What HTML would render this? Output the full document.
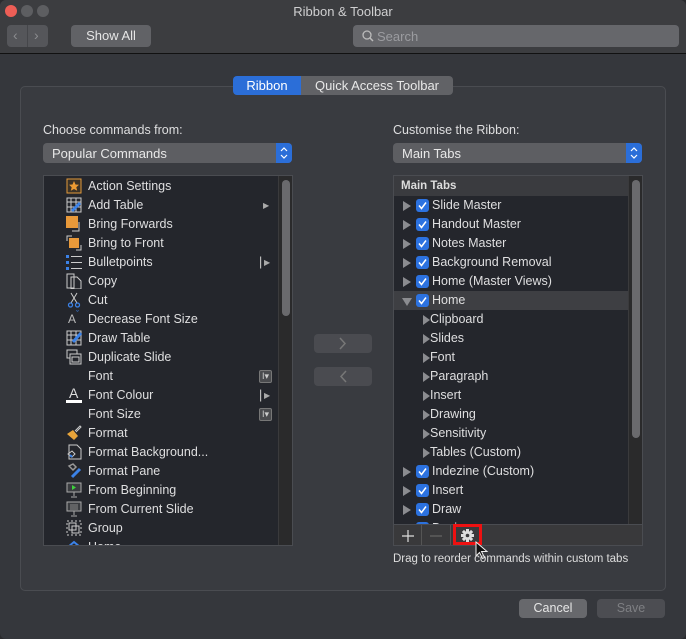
<!DOCTYPE html>
<html><head><meta charset="utf-8"><style>
*{box-sizing:border-box;margin:0;padding:0}
body{width:686px;height:639px;overflow:hidden;background:#2a2b2e;font-family:"Liberation Sans",sans-serif;font-size:12.5px;color:#dfdfe0;position:relative}
.win{position:absolute;left:0;top:0;width:686px;height:639px;background:#35373c;border-radius:6px;overflow:hidden}
.tb{position:absolute;left:0;top:0;width:686px;height:54px;background:#3c3d40;border-bottom:1px solid #111}
.a{position:absolute}
.dot{position:absolute;top:5px;width:12px;height:12px;border-radius:50%;background:#5d5e61}
.btn{position:absolute;background:#616266;border-radius:4px;color:#e6e6e6;text-align:center}
.box{position:absolute;left:20px;top:86px;width:646px;height:505px;background:#393b40;border:1px solid #4a4c51;border-radius:5px}
.pop{position:absolute;height:20px;background:#5d5e62;border-radius:4px;color:#e8e8e8;padding:3px 0 0 9px;font-size:13px}
.pop .ar{position:absolute;right:0;top:0;width:16px;height:20px;background:#2b6ed8;border-radius:0 4px 4px 0}
.list{position:absolute;top:175px;width:250px;height:371px;background:#24262c;border:1px solid #4a4c51;overflow:hidden}
.row{position:absolute;left:0;height:19px;line-height:19px;white-space:nowrap}
.track{position:absolute;top:0;right:0;width:14px;height:371px;background:#2a2a2b;border-left:1px solid #3a3a3c}
.thumb{position:absolute;left:3px;width:8px;background:#6a6a6d;border-radius:4px}
.ic{position:absolute;left:22px;top:1px}
.cb{position:absolute;top:3px;width:13px;height:13px;background:#2c72e0;border-radius:3px}
.tri{position:absolute;top:5px;width:0;height:0;border-top:5px solid transparent;border-bottom:5px solid transparent;border-left:8px solid #8b8c90}
</style></head><body>
<div class="win">
<div class="tb">
 <div class="dot" style="left:5px;background:#ed5e56"></div>
 <div class="dot" style="left:21px"></div>
 <div class="dot" style="left:37px"></div>
 <div class="a" style="left:0;width:686px;top:4px;text-align:center;color:#cfcfd0;font-size:13px">Ribbon &amp; Toolbar</div>
 <div class="btn" style="left:7px;top:25px;width:41px;height:22px;background:#55565a"><div class="a" style="left:20px;top:0;width:1px;height:22px;background:#45464a"></div><span class="a" style="left:6px;top:2px;color:#8c8d90;font-size:14px">‹</span><span class="a" style="left:27px;top:2px;color:#8c8d90;font-size:14px">›</span></div>
 <div class="btn" style="left:71px;top:25px;width:80px;height:22px;line-height:22px;font-size:13px">Show All</div>
 <div class="btn" style="left:353px;top:25px;width:326px;height:22px;background:#66676b;text-align:left">
  <svg class="a" style="left:9px;top:5px" width="12" height="12"><circle cx="5" cy="5" r="4" fill="none" stroke="#bbb" stroke-width="1.3"/><line x1="8" y1="8" x2="11" y2="11" stroke="#bbb" stroke-width="1.5"/></svg>
  <span class="a" style="left:24px;top:4px;color:#9b9ca0;font-size:13px">Search</span></div>
</div>
<div class="box"></div>
<div class="a" style="left:233px;top:76px;width:68px;height:19px;background:#2b6ed8;border-radius:4px 0 0 4px;color:#fff;text-align:center;line-height:19px;font-size:13px">Ribbon</div>
<div class="a" style="left:301px;top:76px;width:152px;height:19px;background:#616266;border-radius:0 4px 4px 0;color:#e8e8e8;text-align:center;line-height:19px;font-size:13px">Quick Access Toolbar</div>
<div class="a" style="left:43px;top:123px;font-size:12.5px">Choose commands from:</div>
<div class="a" style="left:393px;top:123px;font-size:12.5px">Customise the Ribbon:</div>
<div class="pop" style="left:43px;top:143px;width:249px">Popular Commands<div class="ar"><svg width="16" height="20"><path d="M5 8l3-3 3 3M5 12l3 3 3-3" fill="none" stroke="#fff" stroke-width="1.2"/></svg></div></div>
<div class="pop" style="left:393px;top:143px;width:249px">Main Tabs<div class="ar"><svg width="16" height="20"><path d="M5 8l3-3 3 3M5 12l3 3 3-3" fill="none" stroke="#fff" stroke-width="1.2"/></svg></div></div>

<div class="list" style="left:43px">
 <div class="row" style="top:1px"><svg class="ic" width="16" height="16"><rect x="1" y="1" width="14" height="14" fill="#3a3228" stroke="#e39a3a"/><path d="M8 3l1.5 3.5 3.5.3-2.7 2.4.9 3.6L8 11l-3.2 1.8.9-3.6L3 6.8l3.5-.3z" fill="#eb9a33"/></svg><span style="margin-left:44px">Action Settings</span></div>
 <div class="row" style="top:20px"><svg class="ic" width="16" height="16"><path d="M1 1h14v14H1zM1 5h14M1 10h14M5 1v14M10 1v14" fill="none" stroke="#ccc"/><path d="M6 14l8-8" stroke="#3b82e8" stroke-width="3"/></svg><span style="margin-left:44px">Add Table</span><span class="a" style="left:219px;top:0;color:#aaa;font-size:8px">▶</span></div>
 <div class="row" style="top:39px"><svg class="ic" width="16" height="16"><rect x="0" y="0" width="12" height="12" fill="#e8993a"/><path d="M13 6v9H6" fill="none" stroke="#ccc"/></svg><span style="margin-left:44px">Bring Forwards</span></div>
 <div class="row" style="top:58px"><svg class="ic" width="16" height="16"><path d="M1 6V1h5M10 15h5v-5" fill="none" stroke="#ccc"/><rect x="3" y="3" width="10" height="10" fill="#e8993a"/></svg><span style="margin-left:44px">Bring to Front</span></div>
 <div class="row" style="top:77px"><svg class="ic" width="16" height="16"><rect x="0" y="1" width="3" height="3" fill="#3b82e8"/><rect x="0" y="7" width="3" height="3" fill="#3b82e8"/><rect x="0" y="13" width="3" height="3" fill="#3b82e8"/><path d="M5 2.5h11M5 8.5h11M5 14.5h11" stroke="#ccc"/></svg><span style="margin-left:44px">Bulletpoints</span><span class="a" style="left:215px;top:0;color:#ccc">|</span><span class="a" style="left:220px;top:0;color:#aaa;font-size:8px">▶</span></div>
 <div class="row" style="top:96px"><svg class="ic" width="16" height="16"><path d="M1 1h7v14H1zM5 4h6l4 4v8H5z" fill="#24262c" stroke="#ccc"/></svg><span style="margin-left:44px">Copy</span></div>
 <div class="row" style="top:115px"><svg class="ic" width="16" height="16"><path d="M5 1l6 10M11 1L5 11" stroke="#ccc"/><circle cx="4.5" cy="13" r="2" fill="none" stroke="#3b82e8" stroke-width="1.3"/><circle cx="11.5" cy="13" r="2" fill="none" stroke="#3b82e8" stroke-width="1.3"/></svg><span style="margin-left:44px">Cut</span></div>
 <div class="row" style="top:134px"><span class="a" style="left:24px;top:0;color:#bbb;font-size:12px">A</span><span class="a" style="left:32px;top:-5px;color:#3b82e8;font-size:9px">ˇ</span><span style="margin-left:44px">Decrease Font Size</span></div>
 <div class="row" style="top:153px"><svg class="ic" width="16" height="16"><path d="M1 1h14v14H1zM1 5h14M1 10h14M5 1v14M10 1v14" fill="none" stroke="#ccc"/><path d="M7 12l8-9" stroke="#3b82e8" stroke-width="3"/></svg><span style="margin-left:44px">Draw Table</span></div>
 <div class="row" style="top:172px"><svg class="ic" width="16" height="16"><path d="M1 1h10v8H1z" fill="none" stroke="#ccc"/><path d="M4 5h11v10H4z" fill="#24262c" stroke="#ccc"/><rect x="6" y="8" width="7" height="5" fill="none" stroke="#ccc"/></svg><span style="margin-left:44px">Duplicate Slide</span></div>
 <div class="row" style="top:191px"><span style="margin-left:44px">Font</span><span class="a" style="left:215px;top:3px;width:13px;height:13px;background:#4a4b4e;border:1px solid #777;border-radius:2px;color:#ccc;font-size:9px;line-height:11px;text-align:center">I▾</span></div>
 <div class="row" style="top:210px"><span class="a" style="left:25px;top:-2px;color:#ddd;font-size:14px">A</span><div class="a" style="left:22px;top:14px;width:16px;height:3px;background:#fff"></div><span style="margin-left:44px">Font Colour</span><span class="a" style="left:215px;top:0;color:#ccc">|</span><span class="a" style="left:220px;top:0;color:#aaa;font-size:8px">▶</span></div>
 <div class="row" style="top:229px"><span style="margin-left:44px">Font Size</span><span class="a" style="left:215px;top:3px;width:13px;height:13px;background:#4a4b4e;border:1px solid #777;border-radius:2px;color:#ccc;font-size:9px;line-height:11px;text-align:center">I▾</span></div>
 <div class="row" style="top:248px"><svg class="ic" width="16" height="16"><path d="M1 9l6-4 5 6-4 4z" fill="#e8a43a"/><path d="M9 6l5-5 1 1-5 5" stroke="#ccc" fill="none"/></svg><span style="margin-left:44px">Format</span></div>
 <div class="row" style="top:267px"><svg class="ic" width="16" height="16"><path d="M3 1h8l4 4v10H3z" fill="none" stroke="#ccc"/><path d="M2 10l4-3 3 3-3 3z" fill="none" stroke="#ccc"/><path d="M4 11l2 2" stroke="#3b82e8" stroke-width="2"/></svg><span style="margin-left:44px">Format Background...</span></div>
 <div class="row" style="top:286px"><svg class="ic" width="16" height="16"><path d="M3 3l4-2 3 3-3 3z" fill="none" stroke="#999" stroke-width="1.5"/><path d="M6 14l8-8" stroke="#3b82e8" stroke-width="3"/></svg><span style="margin-left:44px">Format Pane</span></div>
 <div class="row" style="top:305px"><svg class="ic" width="16" height="16"><rect x="1" y="1" width="14" height="9" fill="#3a3c40" stroke="#aaa"/><path d="M6 3v5l4-2.5z" fill="#3ed23e"/><path d="M8 10v4M5 15h6" stroke="#aaa"/></svg><span style="margin-left:44px">From Beginning</span></div>
 <div class="row" style="top:324px"><svg class="ic" width="16" height="16"><rect x="1" y="1" width="14" height="9" fill="#3a3c40" stroke="#aaa"/><path d="M4 4h8M4 6h8M4 8h8" stroke="#888"/><path d="M8 10v4M5 15h6" stroke="#aaa"/></svg><span style="margin-left:44px">From Current Slide</span></div>
 <div class="row" style="top:343px"><svg class="ic" width="16" height="16"><rect x="1" y="1" width="14" height="14" fill="none" stroke="#ccc" stroke-dasharray="2 2"/><rect x="3" y="3" width="7" height="7" fill="none" stroke="#ccc"/><rect x="6" y="6" width="7" height="7" fill="none" stroke="#ccc"/></svg><span style="margin-left:44px">Group</span></div>
 <div class="row" style="top:362px"><svg class="ic" width="16" height="16"><path d="M2 8l6-5 6 5" fill="none" stroke="#3b82e8" stroke-width="2"/></svg><span style="margin-left:44px">Home</span></div>
 <div class="track" style="right:0"><div class="thumb" style="top:4px;height:136px"></div></div>
</div>

<div class="list" style="left:393px">
 <div class="row" style="top:0;width:236px;height:20px;background:#3a3b3f;font-weight:bold;font-size:11.5px;padding-left:7px;line-height:20px;color:#ddd">Main Tabs</div>
 <div class="row" style="top:115px;width:236px;background:#3e3f43"></div>
 <div id="rr"></div>
 <div class="track" style="height:348px"><div class="thumb" style="top:4px;height:258px"></div></div>
 <div class="a" style="left:0;top:348px;width:249px;height:22px;background:#39393b;border-top:1px solid #4a4c51">
  <div class="a" style="left:27px;top:0;width:1px;height:22px;background:#555"></div>
  <div class="a" style="left:56px;top:0;width:1px;height:22px;background:#555"></div>
  <svg class="a" style="left:7px;top:4px" width="14" height="14"><path d="M7 1v12M1 7h12" stroke="#ddd" stroke-width="1.2"/></svg>
  <svg class="a" style="left:35px;top:4px" width="14" height="14"><path d="M1 7h12" stroke="#666" stroke-width="1.2"/></svg>
  <div class="a" style="left:59px;top:-1px;width:29px;height:21px;border:3px solid #ee1111"></div>
  <svg class="a" style="left:66px;top:3px" width="15" height="15"><g fill="#ddd"><circle cx="7.5" cy="7.5" r="4.5"/><rect x="6" y="1" width="3" height="13"/><rect x="1" y="6" width="13" height="3"/><rect x="6" y="1" width="3" height="13" transform="rotate(45 7.5 7.5)"/><rect x="6" y="1" width="3" height="13" transform="rotate(-45 7.5 7.5)"/></g><circle cx="7.5" cy="7.5" r="1.8" fill="#39393b"/></svg>
 </div>
</div>
<svg class="a" style="left:475px;top:541px" width="14" height="20"><path d="M1 1v14l3.5-3.5 3 6 2-1-3-6H12z" fill="#111" stroke="#eee" stroke-width="1"/></svg>

<div class="btn" style="left:314px;top:334px;width:58px;height:19px;background:#4a4b50"><svg width="58" height="19"><path d="M26 4l5 5.5-5 5.5" fill="none" stroke="#777" stroke-width="1.5"/></svg></div>
<div class="btn" style="left:314px;top:367px;width:58px;height:19px;background:#4a4b50"><svg width="58" height="19"><path d="M32 4l-5 5.5 5 5.5" fill="none" stroke="#777" stroke-width="1.5"/></svg></div>

<div class="a" style="left:393px;top:553px;font-size:11.5px;color:#ddd">Drag to reorder commands within custom tabs</div>
<div class="btn" style="left:519px;top:599px;width:68px;height:19px;line-height:19px;background:#67686c;font-size:12.5px">Cancel</div>
<div class="btn" style="left:597px;top:599px;width:68px;height:19px;line-height:19px;background:#4c4d52;color:#7e7f83;font-size:12.5px">Save</div>
</div>
<script>
var items=[["t","Slide Master"],["t","Handout Master"],["t","Notes Master"],["t","Background Removal"],["t","Home (Master Views)"],["o","Home"],["g","Clipboard"],["g","Slides"],["g","Font"],["g","Paragraph"],["g","Insert"],["g","Drawing"],["g","Sensitivity"],["g","Tables (Custom)"],["t","Indezine (Custom)"],["t","Insert"],["t","Draw"],["t","Design"]];
var h="";items.forEach(function(it,i){var top=20+i*19;
if(it[0]=="g"){h+='<div class="row" style="top:'+top+'px"><div class="tri" style="left:29px;border-left-width:7px"></div><span class="a" style="left:36px">'+it[1]+'</span></div>';}
else{var tri=it[0]=="o"?'<div class="a" style="left:8px;top:7px;border-left:5px solid transparent;border-right:5px solid transparent;border-top:8px solid #8b8c90"></div>':'<div class="tri" style="left:9px"></div>';
h+='<div class="row" style="top:'+top+'px">'+tri+'<div class="cb" style="left:22px"><svg width="13" height="13"><path d="M3 6.5l2.5 3L10 3.5" fill="none" stroke="#fff" stroke-width="1.5"/></svg></div><span class="a" style="left:38px">'+it[1]+'</span></div>';}});
document.getElementById("rr").outerHTML=h;
</script>
</body></html>
